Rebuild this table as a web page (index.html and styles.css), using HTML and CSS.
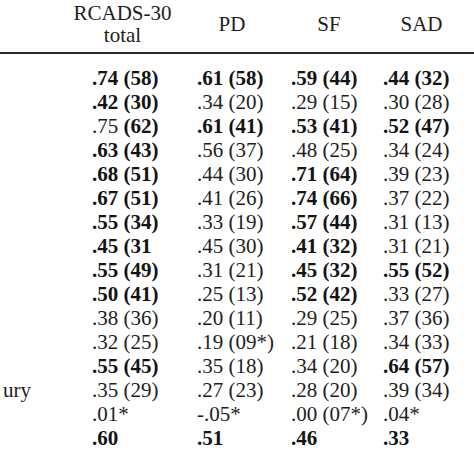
FILE: index.html
```html
<!DOCTYPE html>
<html lang="en">
<head>
<meta charset="utf-8">
<title>RCADS-30 correlations</title>
<link rel="stylesheet" href="styles.css">
</head>
<body>
<div class="table">
  <div class="row head">
    <div class="label"></div>
    <div class="hc hc1"><span>RCADS-30<br>total</span></div>
    <div class="hc hc2"><span>PD</span></div>
    <div class="hc hc3"><span>SF</span></div>
    <div class="hc hc4"><span>SAD</span></div>
  </div>
  <div class="rule"></div>
  <div class="body">
    <div class="row"><div class="label"></div><div class="c"><b>.74 (58)</b></div><div class="c"><b>.61 (58)</b></div><div class="c"><b>.59 (44)</b></div><div class="c"><b>.44 (32)</b></div></div>
    <div class="row"><div class="label"></div><div class="c"><b>.42 (30)</b></div><div class="c">.34 (20)</div><div class="c">.29 (15)</div><div class="c">.30 (28)</div></div>
    <div class="row"><div class="label"></div><div class="c">.75 <b>(62)</b></div><div class="c"><b>.61 (41)</b></div><div class="c"><b>.53 (41)</b></div><div class="c"><b>.52 (47)</b></div></div>
    <div class="row"><div class="label"></div><div class="c"><b>.63 (43)</b></div><div class="c">.56 (37)</div><div class="c">.48 (25)</div><div class="c">.34 (24)</div></div>
    <div class="row"><div class="label"></div><div class="c"><b>.68 (51)</b></div><div class="c">.44 (30)</div><div class="c"><b>.71 (64)</b></div><div class="c">.39 (23)</div></div>
    <div class="row"><div class="label"></div><div class="c"><b>.67 (51)</b></div><div class="c">.41 (26)</div><div class="c"><b>.74 (66)</b></div><div class="c">.37 (22)</div></div>
    <div class="row"><div class="label"></div><div class="c"><b>.55 (34)</b></div><div class="c">.33 (19)</div><div class="c"><b>.57 (44)</b></div><div class="c">.31 (13)</div></div>
    <div class="row"><div class="label"></div><div class="c"><b>.45 (31</b></div><div class="c">.45 (30)</div><div class="c"><b>.41 (32)</b></div><div class="c">.31 (21)</div></div>
    <div class="row"><div class="label"></div><div class="c"><b>.55 (49)</b></div><div class="c">.31 (21)</div><div class="c"><b>.45 (32)</b></div><div class="c"><b>.55 (52)</b></div></div>
    <div class="row"><div class="label"></div><div class="c"><b>.50 (41)</b></div><div class="c">.25 (13)</div><div class="c"><b>.52 (42)</b></div><div class="c">.33 (27)</div></div>
    <div class="row"><div class="label"></div><div class="c">.38 (36)</div><div class="c">.20 (11)</div><div class="c">.29 (25)</div><div class="c">.37 (36)</div></div>
    <div class="row"><div class="label"></div><div class="c">.32 (25)</div><div class="c">.19 (09*)</div><div class="c">.21 (18)</div><div class="c">.34 (33)</div></div>
    <div class="row"><div class="label"></div><div class="c"><b>.55 (45)</b></div><div class="c">.35 (18)</div><div class="c">.34 (20)</div><div class="c"><b>.64 (57)</b></div></div>
    <div class="row"><div class="label">ury</div><div class="c">.35 (29)</div><div class="c">.27 (23)</div><div class="c">.28 (20)</div><div class="c">.39 (34)</div></div>
    <div class="row"><div class="label"></div><div class="c">.01*</div><div class="c">-.05*</div><div class="c">.00 (07*)</div><div class="c">.04*</div></div>
    <div class="row"><div class="label"></div><div class="c"><b>.60</b></div><div class="c"><b>.51</b></div><div class="c"><b>.46</b></div><div class="c"><b>.33</b></div></div>
  </div>
</div>
</body>
</html>
```

FILE: styles.css
```css
html, body {
  margin: 0;
  padding: 0;
  background: #ffffff;
}
body {
  font-family: "Liberation Serif", "Times New Roman", serif;
  font-size: 21px;
  color: #1e1e1e;
  width: 474px;
  height: 474px;
  overflow: hidden;
}
.table {
  display: flex;
  flex-direction: column;
}
.row {
  display: grid;
  grid-template-columns: 92px 105px 94px 92px 1fr;
  line-height: 24px;
  white-space: nowrap;
}
.head {
  padding-top: 2px;
  padding-bottom: 6px;
  line-height: 22px;
  align-items: center;
}
.hc {
  display: flex;
  justify-content: center;
  text-align: center;
}
.hc1 { width: 61px; }
.hc2 { width: 70px; }
.hc3 { width: 76px; }
.hc4 { width: 77px; }
.rule {
  height: 2px;
  background: #2a2a2a;
}
.body {
  padding-top: 12px;
  display: flex;
  flex-direction: column;
}
.label {
  padding-left: 3px;
}
b {
  font-weight: 700;
  color: #141414;
}
```
